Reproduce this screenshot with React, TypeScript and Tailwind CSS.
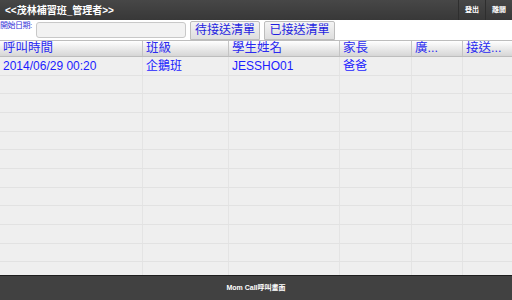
const font = "font-['Liberation_Sans','Noto_Sans_CJK_TC',sans-serif]";

const columns = [
  { label: "呼叫時間", width: "w-[142px]" },
  { label: "班級", width: "w-[86px]" },
  { label: "學生姓名", width: "w-[111px]" },
  { label: "家長", width: "w-[72px]" },
  { label: "廣...", width: "w-[51px]" },
  { label: "接送...", width: "flex-1" },
];

const rows = [["2014/06/29 00:20", "企鵝班", "JESSHO01", "爸爸", "", ""]];

export default function App() {
  const blank = Array.from({ length: 12 }, () => ["", "", "", "", "", ""]);
  const all = [...rows, ...blank];

  return (
    <div className={`flex h-[300px] w-[512px] flex-col overflow-hidden bg-[#efefef] ${font}`}>
      {/* top bar */}
      <div className="flex h-[20px] items-center bg-gradient-to-b from-[#474747] to-[#383838]">
        <span className="pl-[5px] text-[10px] font-bold text-white">&lt;&lt;茂林補習班_管理者&gt;&gt;</span>
        <div className="ml-auto flex h-full items-center text-[7px] font-bold text-white">
          <span className="flex h-full items-center border-l border-[#2e2e2e] px-[6px]">登出</span>
          <span className="flex h-full items-center border-l border-[#2e2e2e] px-[6px]">離開</span>
        </div>
      </div>

      {/* filter bar */}
      <div className="flex h-[20px] items-start bg-white">
        <span className="mt-[1px] w-[36px] text-[8px] leading-[10px] tracking-[-0.5px] text-[#3434d8]">開始日期:</span>
        <div className="mt-[2px] h-[16px] w-[150px] rounded-[3px] border border-[#c8c8c8] bg-[#f2f2f2]" />
        <button className="ml-[4px] mt-[1px] h-[19px] w-[70px] rounded-t-[2px] border border-[#bdbdbd] bg-gradient-to-b from-[#f4f4f4] to-[#dedede] text-[12px] leading-[17px] text-[#1f1fe0]">
          待接送清單
        </button>
        <button className="ml-[4px] mt-[1px] h-[19px] w-[71px] rounded-t-[2px] border border-[#bdbdbd] bg-gradient-to-b from-[#f4f4f4] to-[#dedede] text-[12px] leading-[17px] text-[#1f1fe0]">
          已接送清單
        </button>
      </div>

      {/* table header */}
      <div className="flex h-[17px] border-b border-t border-[#bdbdbd] bg-gradient-to-b from-white to-[#d6d6d6]">
        {columns.map((c, i) => (
          <div
            key={c.label}
            className={`${c.width} ${i > 0 ? "border-l border-[#c4c4c4]" : ""} flex items-center pl-[3px] text-[12.5px] text-[#2a2af0]`}
          >
            {c.label}
          </div>
        ))}
      </div>

      {/* body */}
      <div className="flex-1 overflow-hidden">
        {all.map((r, ri) => (
          <div key={ri} className="flex h-[18.67px] border-b border-[#e2e2e2]">
            {columns.map((c, i) => (
              <div
                key={c.label}
                className={`${c.width} ${i > 0 ? "border-l border-[#e4e4e4]" : ""} flex items-center pl-[3px] text-[12px] text-[#1c1cff]`}
              >
                {r[i]}
              </div>
            ))}
          </div>
        ))}
      </div>

      {/* footer */}
      <div className="flex h-[25px] items-center justify-center border-t border-[#1e1e1e] bg-[#414141]">
        <span className="text-[7px] font-bold text-white">Mom Call呼叫畫面</span>
      </div>
    </div>
  );
}
